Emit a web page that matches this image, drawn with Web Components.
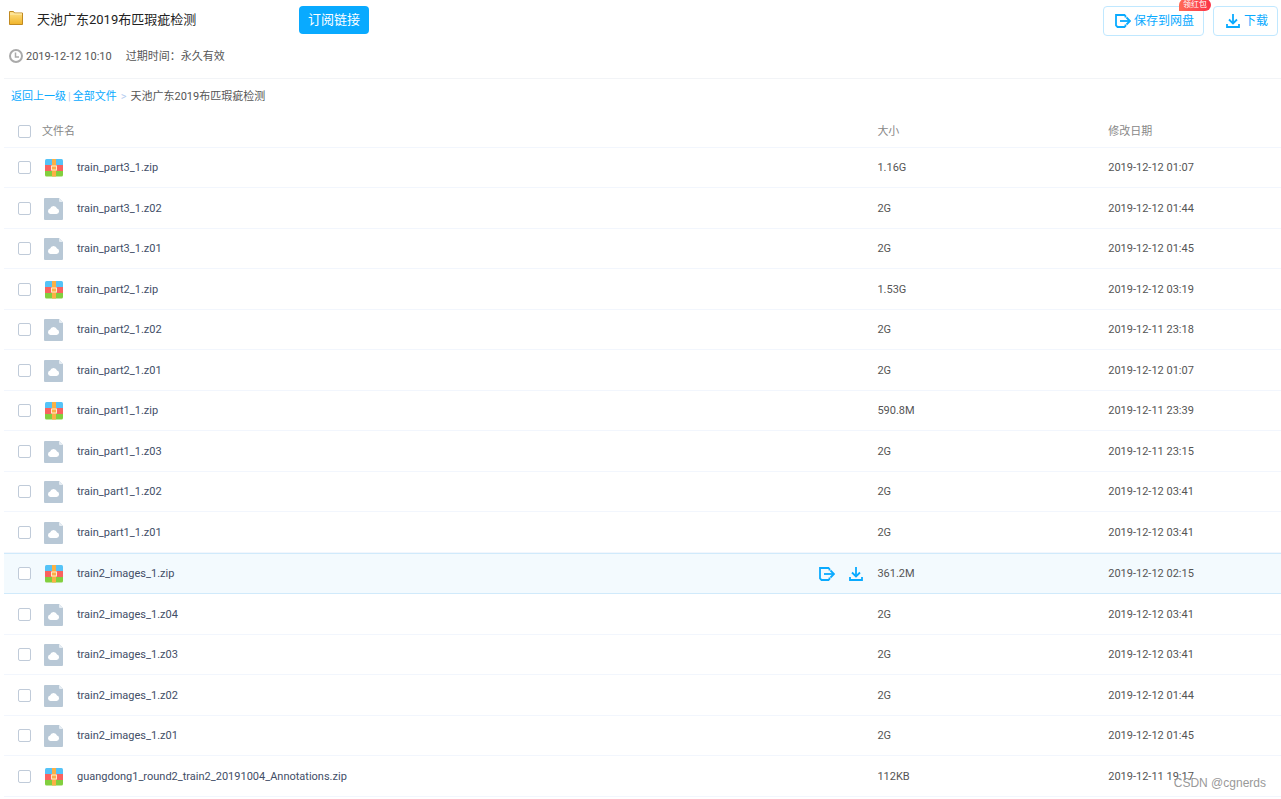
<!DOCTYPE html>
<html lang="zh-CN">
<head>
<meta charset="utf-8">
<meta name="viewport" content="width=device-width, initial-scale=1">
<title>天池广东2019布匹瑕疵检测</title>
<style>
  body {
    margin: 0;
    background: #fff;
    color: #555;
    font: 11px/16px Roboto, "Noto Sans CJK SC", sans-serif;
  }
</style>
</head>
<body>
<share-page>
  <share-header slot="header" name="天池广东2019布匹瑕疵检测" created="2019-12-12 10:10" expires="永久有效"></share-header>
  <share-breadcrumb slot="path" current="天池广东2019布匹瑕疵检测"></share-breadcrumb>
  <file-table></file-table>
</share-page>

<script>
/**
 * SharePage: page frame with the header, the path and the file list
 * @slot header - Title and actions
 * @slot path - Breadcrumb
 * @slot - File list
 */
class SharePage extends HTMLElement {
  constructor() {
    super();
    this.attachShadow({ mode: 'open' }).innerHTML = `
      <style>
        :host { display: block; position: relative; }
        main { padding-left: 4px; }
        .watermark {
          position: absolute;
          right: 15px;
          bottom: 6px;
          font: 12px/16px "Liberation Sans", Arial, sans-serif;
          color: #999;
          pointer-events: none;
        }
      </style>
      <main>
        <slot name="header"></slot>
        <slot name="path"></slot>
        <slot></slot>
      </main>
      <span class="watermark">CSDN @cgnerds</span>
    `;
  }
}
customElements.define('share-page', SharePage);

const ICONS = {
  save: `<svg width="16" height="14" viewBox="0 0 16 14" fill="none" stroke="currentColor" stroke-width="1.8">
    <path d="M10.500 3.500V2L9.500 1H1v10.500L2.500 13h7l1-1v-1.500"/><path d="M5 7h10"/><path d="M11.500 3.500L15 7l-3.500 3.500"/></svg>`,
  download: `<svg width="16" height="14" viewBox="-1 0 16 14" fill="none" stroke="currentColor" stroke-width="1.8">
    <path d="M7 0v9"/><path d="M3 5.500l4 4 4-4"/><path d="M1 10v3h12v-3"/></svg>`,
  folder: `<svg width="16" height="14" viewBox="0 0 16 14">
    <defs><linearGradient id="g" x2="0" y2="1"><stop stop-color="#ffe28a"/><stop offset="1" stop-color="#f0b429"/></linearGradient></defs>
    <path d="M1.500 .5h4l1 1.500h8v11.500h-13z" fill="url(#g)" stroke="#c18a20"/><path d="M2 3h12" stroke="#ffefb5"/></svg>`,
  clock: `<svg width="14" height="14" viewBox="0 0 14 14" fill="none" stroke="#aaa" stroke-width="2">
    <circle cx="7" cy="7" r="6"/><path d="M6.500 3.500V8H10" stroke-width="1.500"/></svg>`,
  zip: `<svg width="20" height="22" viewBox="0 0 20 22">
    <path d="M1 8V3.500Q1 2 2.500 2h15Q19 2 19 3.500V8z" fill="#55c3f7"/>
    <path d="M1 8h18v6H1z" fill="#fa625f"/>
    <path d="M1 14h18v4q0 1.500-1.500 1.500h-15Q1 19.500 1 18z" fill="#82cf3e"/>
    <path d="M8 2h4v17.500H8z" fill="#fbb044"/>
    <rect x="7.500" y="9" width="5" height="4" fill="#fbb044" stroke="#ffe9c9"/></svg>`,
  file: `<svg width="20" height="22" viewBox="0 0 20 22">
    <path d="M1 0h14l4 4v17q0 1-1 1H1q-1 0-1-1V1q0-1 1-1z" fill="#b8c8d6"/>
    <path d="M15 0l4 4h-3q-1 0-1-1z" fill="#e6edf3"/>
    <path d="M6.500 16a2.800 2.800 0 0 1-.4-5.500A3.600 3.600 0 0 1 13 10.500 2.800 2.800 0 0 1 12.500 16z" fill="#fff"/></svg>`
};

/**
 * NetIcon
 * @attr name - save, download, folder, clock, zip or file
 */
class NetIcon extends HTMLElement {
  constructor() {
    super();
    this.attachShadow({ mode: 'open' });
  }

  connectedCallback() {
    this.shadowRoot.innerHTML = `
      <style>
        :host { display: inline-flex; flex: none; }
        svg { display: block; }
      </style>
      ${ICONS[this.getAttribute('name')] || ''}
    `;
  }
}
customElements.define('net-icon', NetIcon);

/**
 * NetButton
 * @attr icon - Icon before the label
 * @attr badge - Small red badge over the top right corner
 * @attr variant - primary for the filled button
 * @slot - Label
 */
class NetButton extends HTMLElement {
  constructor() {
    super();
    this.attachShadow({ mode: 'open' });
  }

  connectedCallback() {
    const icon = this.getAttribute('icon');
    const badge = this.getAttribute('badge');
    this.shadowRoot.innerHTML = `
      <style>
        :host { display: inline-block; position: relative; }
        button {
          display: flex;
          align-items: center;
          gap: 3px;
          height: 30px;
          padding: 0 9px 0 11px;
          border: 1px solid #c0e8ff;
          border-radius: 4px;
          background: #fff;
          color: #09aaff;
          font: inherit;
          font-size: 12px;
          white-space: nowrap;
          cursor: pointer;
        }
        :host([variant="primary"]) button {
          height: 28px;
          padding: 0 9px;
          border: 0;
          background: #09aaff;
          color: #fff;
          font-size: 13px;
        }
        .badge {
          position: absolute;
          top: -7px;
          right: -7px;
          padding: 0 4px;
          border-radius: 6px 6px 6px 0;
          background: linear-gradient(90deg, #ff6a55, #fb3348);
          color: #fff;
          font-size: 8px;
          line-height: 12px;
        }
      </style>
      <button type="button">${icon ? `<net-icon name="${icon}"></net-icon>` : ''}<slot></slot></button>
      ${badge ? `<span class="badge">${badge}</span>` : ''}
    `;
  }
}
customElements.define('net-button', NetButton);

/**
 * ShareHeader
 * @attr name - Name of the shared folder
 * @attr created - Share time
 * @attr expires - Expiry
 */
class ShareHeader extends HTMLElement {
  constructor() {
    super();
    this.attachShadow({ mode: 'open' });
  }

  connectedCallback() {
    this.shadowRoot.innerHTML = `
      <style>
        :host { display: block; border-bottom: 1px solid #f2f4f7; }
        .top {
          display: flex;
          align-items: flex-start;
          height: 40px;
          padding: 6px 3px 0 4px;
          box-sizing: border-box;
        }
        .title { display: flex; align-items: flex-start; gap: 13px; width: 291px; padding-top: 4px; }
        h1 { margin: 0; color: #222; font-size: 13px; line-height: 20px; font-weight: 400; }
        .title net-icon { padding-top: 1px; }
        .actions { display: flex; gap: 9px; margin-left: auto; }
        .info { display: flex; align-items: center; height: 32px; padding: 0 5px 6px; }
        .info span { margin: 0 14px 0 3px; padding-top: 2px; }
        .info span + span { margin: 0; }
      </style>
      <div class="top">
        <div class="title"><net-icon name="folder"></net-icon><h1>${this.getAttribute('name')}</h1></div>
        <net-button variant="primary">订阅链接</net-button>
        <div class="actions">
          <net-button icon="save" badge="领红包">保存到网盘</net-button>
          <net-button icon="download">下载</net-button>
        </div>
      </div>
      <div class="info">
        <net-icon name="clock"></net-icon>
        <span>${this.getAttribute('created')}</span>
        <span>过期时间：${this.getAttribute('expires')}</span>
      </div>
    `;
  }
}
customElements.define('share-header', ShareHeader);

/**
 * ShareBreadcrumb
 * @attr current - Name of the open folder
 */
class ShareBreadcrumb extends HTMLElement {
  constructor() {
    super();
    this.attachShadow({ mode: 'open' });
  }

  connectedCallback() {
    this.shadowRoot.innerHTML = `
      <style>
        :host { display: block; }
        nav { display: flex; align-items: center; height: 36px; padding-left: 7px; }
        a { color: #09aaff; text-decoration: none; }
        i { margin: 0 2px; color: #b4cdf0; font-style: normal; }
        i.arrow { margin: 0 4px; }
      </style>
      <nav aria-label="路径">
        <a href="#up">返回上一级</a><i>|</i><a href="#all">全部文件</a><i class="arrow">&gt;</i><span>${this.getAttribute('current')}</span>
      </nav>
    `;
  }
}
customElements.define('share-breadcrumb', ShareBreadcrumb);

const FILES = [
  ['train_part3_1.zip', '1.16G', '2019-12-12 01:07'],
  ['train_part3_1.z02', '2G', '2019-12-12 01:44'],
  ['train_part3_1.z01', '2G', '2019-12-12 01:45'],
  ['train_part2_1.zip', '1.53G', '2019-12-12 03:19'],
  ['train_part2_1.z02', '2G', '2019-12-11 23:18'],
  ['train_part2_1.z01', '2G', '2019-12-12 01:07'],
  ['train_part1_1.zip', '590.8M', '2019-12-11 23:39'],
  ['train_part1_1.z03', '2G', '2019-12-11 23:15'],
  ['train_part1_1.z02', '2G', '2019-12-12 03:41'],
  ['train_part1_1.z01', '2G', '2019-12-12 03:41'],
  ['train2_images_1.zip', '361.2M', '2019-12-12 02:15', true],
  ['train2_images_1.z04', '2G', '2019-12-12 03:41'],
  ['train2_images_1.z03', '2G', '2019-12-12 03:41'],
  ['train2_images_1.z02', '2G', '2019-12-12 01:44'],
  ['train2_images_1.z01', '2G', '2019-12-12 01:45'],
  ['guangdong1_round2_train2_20191004_Annotations.zip', '112KB', '2019-12-11 19:17']
];

function fileRow([name, size, date, active], i) {
  return `
    <tr class="${active ? 'active' : ''}">
      <td>
        <div class="name">
          <input type="checkbox" id="file-${i}" aria-label="${name}">
          <net-icon name="${name.endsWith('.zip') ? 'zip' : 'file'}"></net-icon>
          <a href="#file-${i}">${name}</a>
          ${active ? `<div class="tools">
            <button type="button" aria-label="保存到网盘"><net-icon name="save"></net-icon></button>
            <button type="button" aria-label="下载"><net-icon name="download"></net-icon></button>
          </div>` : ''}
        </div>
      </td>
      <td>${size}</td>
      <td>${date}</td>
    </tr>
  `;
}

/**
 * FileTable: the list of shared files
 */
class FileTable extends HTMLElement {
  constructor() {
    super();
    this.attachShadow({ mode: 'open' });
  }

  connectedCallback() {
    this.shadowRoot.innerHTML = `
      <style>
        :host { display: block; }
        table { width: 100%; border-collapse: separate; border-spacing: 0; table-layout: fixed; }
        .size { width: 18%; }
        .date { width: 14%; }
        th, td {
          box-sizing: border-box;
          height: 40px;
          padding: 1px 0 0 5px;
          border-bottom: 1px solid #f2f6fd;
          text-align: left;
          font-weight: 400;
        }
        th { height: 33px; padding-top: 2px; color: #888; }
        th:last-child, td:last-child { padding-left: 6px; }
        tbody tr:nth-child(even) td, tbody .active td { height: 41px; }
        th:first-child, td:first-child { padding: 0 0 0 14px; }
        .name { display: flex; align-items: center; }
        .name label { margin-left: 11px; padding-top: 2px; }
        .name > net-icon { margin: 1px 13px 0 13px; }
        a { padding-top: 1px; color: #424e67; text-decoration: none; }
        input {
          appearance: none;
          flex: none;
          width: 13px;
          height: 13px;
          margin: 0;
          border: 1px solid #c0cbd9;
          border-radius: 2px;
          background: #fff;
        }
        input:checked { background: #09aaff; }
        .active td {
          background: #f3fafe;
          border-top: 1px solid #d0eafb;
          border-bottom-color: #d0eafb;
        }
        .tools { display: flex; gap: 13px; margin-left: auto; padding: 3px 8px 0 0; }
        .tools button { padding: 0; border: 0; background: none; color: #09aaff; cursor: pointer; }
      </style>
      <table>
        <colgroup><col><col class="size"><col class="date"></colgroup>
        <thead>
          <tr>
            <th scope="col"><div class="name"><input type="checkbox" id="all"><label for="all">文件名</label></div></th>
            <th scope="col">大小</th>
            <th scope="col">修改日期</th>
          </tr>
        </thead>
        <tbody>${FILES.map(fileRow).join('')}</tbody>
      </table>
    `;
  }
}
customElements.define('file-table', FileTable);
</script>
</body>
</html>
